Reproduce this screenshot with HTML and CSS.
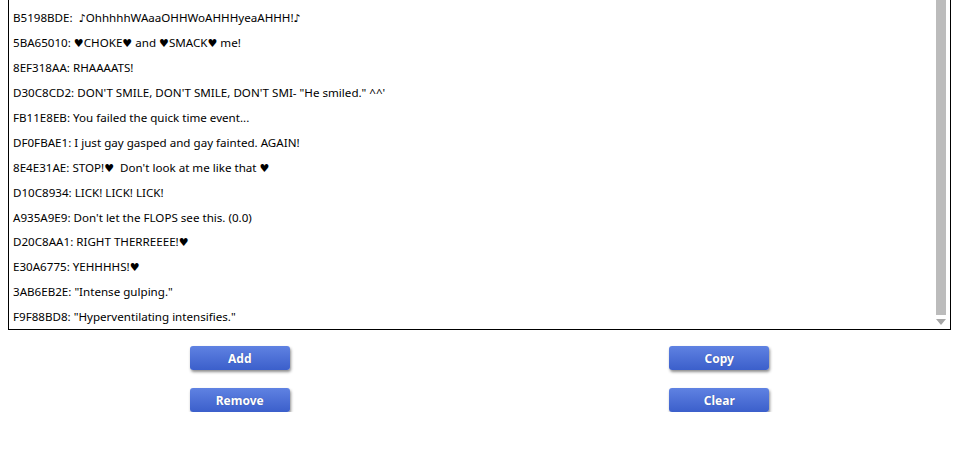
FILE: index.html
```html
<!DOCTYPE html>
<html lang="en">
<head>
  <meta charset="UTF-8">
  <title>Entries</title>
  <link rel="stylesheet" href="styles.css">
</head>
<body>

<div class="listbox">
  <ul class="entries">
    <li>B5198BDE:&nbsp; <span class="sym">&#9834;</span>OhhhhhWAaaOHHWoAHHHyeaAHHH!<span class="sym">&#9834;</span></li>
    <li>5BA65010: <span class="sym">&#9829;</span>CHOKE<span class="sym">&#9829;</span> and <span class="sym">&#9829;</span>SMACK<span class="sym">&#9829;</span> me!</li>
    <li>8EF318AA: RHAAAATS!</li>
    <li>D30C8CD2: DON'T SMILE, DON'T SMILE, DON'T SMI- "He smiled." ^^'</li>
    <li>FB11E8EB: You failed the quick time event...</li>
    <li>DF0FBAE1: I just gay gasped and gay fainted. AGAIN!</li>
    <li>8E4E31AE: STOP!<span class="sym">&#9829;</span>&nbsp; Don't look at me like that <span class="sym">&#9829;</span></li>
    <li>D10C8934: LICK! LICK! LICK!</li>
    <li>A935A9E9: Don't let the FLOPS see this. (0.0)</li>
    <li>D20C8AA1: RIGHT THERREEEE!<span class="sym">&#9829;</span></li>
    <li>E30A6775: YEHHHHS!<span class="sym">&#9829;</span></li>
    <li>3AB6EB2E: "Intense gulping."</li>
    <li>F9F88BD8: "Hyperventilating intensifies."</li>
  </ul>
  <div class="scrollbar">
    <div class="thumb"></div>
    <div class="arrow"></div>
  </div>
</div>

<div class="actions">
  <div class="col">
    <button class="btn">Add</button>
    <button class="btn">Remove</button>
  </div>
  <div class="col">
    <button class="btn">Copy</button>
    <button class="btn">Clear</button>
  </div>
</div>

</body>
</html>
```

FILE: styles.css
```css
html {
  background-color: #fff;
}

body {
  margin: 0;
  font-family: 'Noto Sans', 'Open Sans', sans-serif;
  font-size: 11.6px;
  color: #000;
}

.listbox {
  margin: 0 8px;
  height: 330px;
  border: 1px solid #000;
  border-top: none;
  display: flex;
  box-sizing: border-box;
}

.entries {
  flex: 1;
  list-style: none;
  margin: 0;
  padding: 6px 0 0 4px;
}

.entries li {
  height: 24.95px;
  line-height: 24.95px;
  white-space: nowrap;
}

.sym {
  font-family: 'DejaVu Sans', sans-serif;
  font-size: 11px;
}

.scrollbar {
  width: 14px;
  margin-right: 2px;
  display: flex;
  flex-direction: column;
  align-items: center;
}

.thumb {
  width: 10px;
  height: 315px;
  background: #bcbcbc;
}

.arrow {
  margin-top: 4px;
  width: 0;
  height: 0;
  border-left: 5px solid transparent;
  border-right: 5px solid transparent;
  border-top: 6px solid #a6a6a6;
}

.actions {
  display: grid;
  grid-template-columns: 1fr 1fr;
  padding-top: 16px;
}

.col {
  display: flex;
  flex-direction: column;
  align-items: center;
  gap: 18px;
}

.btn {
  width: 100px;
  height: 24px;
  padding: 0;
  border: none;
  border-radius: 3px;
  background: linear-gradient(#5f82e2, #3b5fcb);
  box-shadow: 1px 2px 3px rgba(0, 0, 0, 0.45);
  color: #fff;
  text-shadow: 0 0 1px rgba(0, 0, 0, 0.3);
  font-family: 'Noto Sans', 'Open Sans', sans-serif;
  font-size: 12px;
  font-weight: bold;
  cursor: pointer;
}
```
